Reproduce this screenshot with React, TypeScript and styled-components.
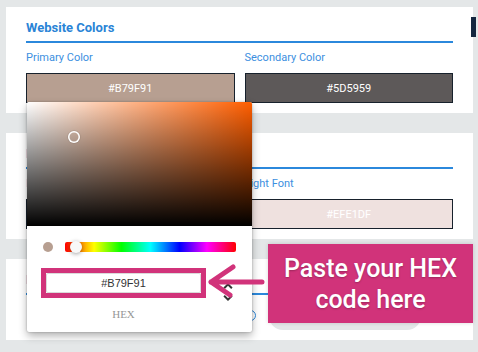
import React from "react";
import styled, { createGlobalStyle } from "styled-components";

const GlobalStyle = createGlobalStyle`
  html, body { margin: 0; padding: 0; background: #e4e7e8; }
  body { font-family: Roboto, "Liberation Sans", Arial, sans-serif; }
`;

const Page = styled.div`
  position: relative;
  width: 478px;
  height: 352px;
  box-sizing: border-box;
  padding: 7px 5px 0 6px;
  display: flex;
  flex-direction: column;
  gap: 20px;
  overflow: hidden;
`;

const Card = styled.section`
  background: #fff;
  padding: 13px 20px 10px;
  display: flex;
  flex-direction: column;
`;

const CardTitle = styled.h2`
  margin: 0;
  font: 700 13px/16px Roboto, "Liberation Sans", sans-serif;
  color: #2a84d6;
  padding-bottom: 5px;
  border-bottom: 2px solid #2b88dc;
`;

const FieldGrid = styled.div`
  display: grid;
  grid-template-columns: 1fr 1fr;
  column-gap: 10px;
  padding-top: 7px;
`;

const Field = styled.div`
  display: flex;
  flex-direction: column;
`;

const FieldLabel = styled.label`
  font: 400 11px/15px Roboto, "Liberation Sans", sans-serif;
  color: #3c8fe0;
`;

const ColorBox = styled.div<{ $bg: string }>`
  margin-top: 8px;
  height: 30px;
  box-sizing: border-box;
  border: 1px solid #17212c;
  background: ${(p) => p.$bg};
  color: #fff;
  display: flex;
  align-items: center;
  justify-content: center;
  font: 400 11px Roboto, "Liberation Sans", sans-serif;
`;

const OptionRow = styled.div`
  display: grid;
  grid-template-columns: 1fr 1fr;
  column-gap: 10px;
  padding-top: 6px;
`;

const Option = styled.div<{ $indent?: boolean }>`
  display: flex;
  align-items: center;
  gap: 13px;
  padding-left: ${(p) => (p.$indent ? "24px" : "0")};
`;

const Radio = styled.span`
  width: 11px;
  height: 11px;
  box-sizing: border-box;
  border-radius: 50%;
  border: 1.5px solid #2b88dc;
  flex: none;
`;

const Pill = styled.div`
  width: 152px;
  height: 29px;
  border-radius: 14px;
  background: #e4e7e8;
`;

/* ---------- Colour picker overlay ---------- */

const Picker = styled.div`
  position: absolute;
  left: 27px;
  top: 102px;
  width: 225px;
  background: #fff;
  border-radius: 2px;
  box-shadow: 0 0 2px rgba(0, 0, 0, 0.3), 0 4px 8px rgba(0, 0, 0, 0.3);
  font-family: "Liberation Serif", serif;
`;

const Saturation = styled.div<{ $hue: string }>`
  position: relative;
  height: 124px;
  border-radius: 2px 2px 0 0;
  background: linear-gradient(to top, #000, rgba(0, 0, 0, 0)),
    linear-gradient(to right, #fff, rgba(255, 255, 255, 0)), ${(p) => p.$hue};
`;

const SatPointer = styled.div<{ $x: number; $y: number }>`
  position: absolute;
  left: ${(p) => p.$x - 6}px;
  top: ${(p) => p.$y - 6}px;
  width: 12px;
  height: 12px;
  border-radius: 50%;
  box-shadow: inset 0 0 0 1.5px #fff, 0 0 1px 0.5px rgba(0, 0, 0, 0.15);
`;

const PickerBody = styled.div`
  padding: 16px 16px 12px;
`;

const Controls = styled.div`
  display: flex;
  align-items: center;
  height: 10px;
`;

const SwatchCol = styled.div`
  width: 22px;
  flex: none;
`;

const Swatch = styled.div<{ $bg: string }>`
  width: 10px;
  height: 10px;
  border-radius: 50%;
  background: ${(p) => p.$bg};
`;

const HueBar = styled.div`
  position: relative;
  flex: 1;
  height: 10px;
  border-radius: 2px;
  background: linear-gradient(
    to right,
    #f00 0%,
    #ff0 17%,
    #0f0 33%,
    #0ff 50%,
    #00f 67%,
    #f0f 83%,
    #f00 100%
  );
`;

const HueHandle = styled.div<{ $pct: number }>`
  position: absolute;
  left: calc(${(p) => p.$pct}% - 6px);
  top: -1px;
  width: 12px;
  height: 12px;
  border-radius: 50%;
  background: #f8f8f8;
  box-shadow: 0 1px 4px 0 rgba(0, 0, 0, 0.37);
`;

const Fields = styled.div`
  display: flex;
  margin-top: 16px;
`;

const FieldCol = styled.div`
  flex: 1;
  display: flex;
  flex-direction: column;
`;

const Highlight = styled.div`
  margin: 0 -2px;
  border: 5px solid #d1337a;
  height: 30px;
  box-sizing: border-box;
  display: flex;
`;

const HexInput = styled.input`
  width: 100%;
  height: 20px;
  box-sizing: border-box;
  border: none;
  border-radius: 2px;
  box-shadow: inset 0 0 0 1px #dadada;
  outline: none;
  padding: 0;
  text-align: center;
  font: 400 11px "Liberation Sans", Arial, sans-serif;
  color: #333;
  background: #fff;
`;

const HexLabel = styled.div`
  margin-top: 11px;
  font: 400 11px/11px "Liberation Serif", serif;
  color: #969696;
  text-transform: uppercase;
  text-align: center;
`;

const Toggle = styled.div`
  width: 32px;
  flex: none;
  text-align: right;
  position: relative;
  svg {
    display: inline-block;
    margin-right: -4px;
    margin-top: 12px;
    width: 24px;
    height: 24px;
  }
`;

/* ---------- Annotation overlays ---------- */

const ArrowSvg = styled.svg`
  position: absolute;
  left: 205px;
  top: 262px;
  width: 65px;
  height: 40px;
  overflow: visible;
`;

const Callout = styled.div`
  position: absolute;
  left: 268px;
  top: 244px;
  width: 205px;
  height: 79px;
  background: #d1337a;
  box-shadow: 0 0 4px rgba(0, 0, 0, 0.15);
  display: flex;
  align-items: center;
  justify-content: center;
  text-align: center;
  color: #fff;
  font: 500 25px/31px Roboto, "Liberation Sans", sans-serif;
  text-shadow: 0 1px 2px rgba(0, 0, 0, 0.25);
`;

const SideTab = styled.div`
  position: absolute;
  left: 471px;
  top: 17px;
  width: 5px;
  height: 20px;
  background: #13273f;
`;

function hexToHsv(hex: string) {
  const n = parseInt(hex.slice(1), 16);
  const r = ((n >> 16) & 255) / 255;
  const g = ((n >> 8) & 255) / 255;
  const b = (n & 255) / 255;
  const max = Math.max(r, g, b);
  const min = Math.min(r, g, b);
  const d = max - min;
  let h = 0;
  if (d) {
    if (max === r) h = ((g - b) / d) % 6;
    else if (max === g) h = (b - r) / d + 2;
    else h = (r - g) / d + 4;
    h *= 60;
    if (h < 0) h += 360;
  }
  return { h, s: max ? d / max : 0, v: max };
}

const PRIMARY = "#B79F91";

export default function App() {
  const hsv = hexToHsv(PRIMARY);
  const satX = hsv.s * 225;
  const satY = (1 - hsv.v) * 124;

  return (
    <>
      <GlobalStyle />
      <Page>
        <Card>
          <CardTitle>Website Colors</CardTitle>
          <FieldGrid>
            <Field>
              <FieldLabel>Primary Color</FieldLabel>
              <ColorBox $bg="#b79f91">#B79F91</ColorBox>
            </Field>
            <Field>
              <FieldLabel>Secondary Color</FieldLabel>
              <ColorBox $bg="#5d5959">#5D5959</ColorBox>
            </Field>
          </FieldGrid>
        </Card>

        <Card>
          <CardTitle>Font Colors</CardTitle>
          <FieldGrid>
            <Field>
              <FieldLabel>Dark Font</FieldLabel>
              <ColorBox $bg="#2f2b2b">#2F2B2B</ColorBox>
            </Field>
            <Field>
              <FieldLabel>Light Font</FieldLabel>
              <ColorBox $bg="#efe1df">#EFE1DF</ColorBox>
            </Field>
          </FieldGrid>
        </Card>

        <Card>
          <CardTitle>Button Style</CardTitle>
          <OptionRow>
            <Option $indent>
              <Pill />
            </Option>
            <Option>
              <Radio />
              <Pill />
            </Option>
          </OptionRow>
        </Card>

        <Picker>
          <Saturation $hue={`hsl(${hsv.h}, 100%, 50%)`}>
            <SatPointer $x={satX} $y={satY} />
          </Saturation>
          <PickerBody>
            <Controls>
              <SwatchCol>
                <Swatch $bg="#b79f91" />
              </SwatchCol>
              <HueBar>
                <HueHandle $pct={(hsv.h / 360) * 100} />
              </HueBar>
            </Controls>
            <Fields>
              <FieldCol>
                <Highlight>
                  <HexInput readOnly value={PRIMARY} />
                </Highlight>
                <HexLabel>hex</HexLabel>
              </FieldCol>
              <Toggle>
                <svg viewBox="0 0 24 24">
                  <path
                    fill="#333"
                    d="M12,18.17L8.83,15L7.42,16.41L12,21L16.59,16.41L15.17,15M12,5.83L15.17,9L16.59,7.59L12,3L7.41,7.59L8.83,9L12,5.83Z"
                  />
                </svg>
              </Toggle>
            </Fields>
          </PickerBody>
        </Picker>

        <ArrowSvg viewBox="0 0 65 40">
          <path
            d="M57 20 H6 M6 20 L28 5 M6 20 L25 33"
            fill="none"
            stroke="#d1337a"
            strokeWidth="5"
            strokeLinecap="round"
            strokeLinejoin="round"
          />
        </ArrowSvg>

        <Callout>
          Paste your HEX
          <br />
          code here
        </Callout>

        <SideTab />
      </Page>
    </>
  );
}
